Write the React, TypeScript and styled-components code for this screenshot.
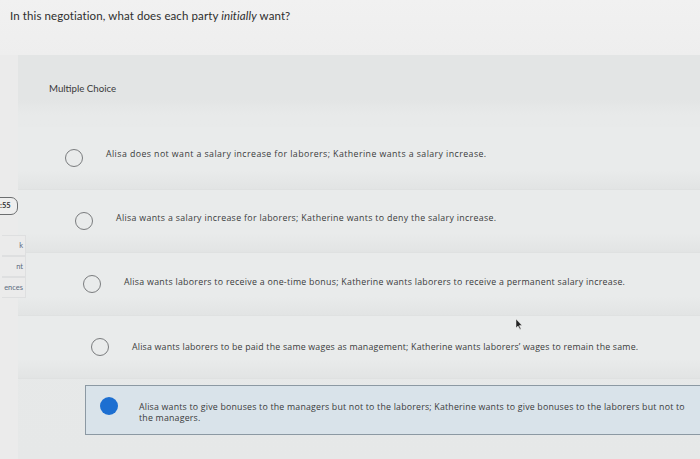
import React from "react";
import styled, { createGlobalStyle } from "styled-components";

const GlobalStyle = createGlobalStyle`
  html, body {
    margin: 0;
    padding: 0;
    background: #ebebeb;
  }
  body {
    font-family: Lato, "Open Sans", "Liberation Sans", sans-serif;
    color: #333;
  }
`;

const Page = styled.div`
  position: relative;
  width: 700px;
  height: 459px;
  overflow: hidden;
  background: #ebebeb;
`;

const Header = styled.header`
  height: 55px;
  box-sizing: border-box;
  padding: 9px 0 0 10px;
  background: linear-gradient(#f1f1f1, #eeeeee);
`;

const Title = styled.h1`
  margin: 0;
  font-size: 11.5px;
  font-weight: 400;
  color: #2e2e2e;
  letter-spacing: 0.1px;

  em {
    font-style: italic;
  }
`;

const Card = styled.main`
  margin-left: 18px;
  background: linear-gradient(
    #e3e5e5 0px,
    #e3e5e5 45px,
    #e8eaea 60px,
    #e6e8e8 100%
  );
  height: 404px;
  box-sizing: border-box;
  padding-top: 27px;
`;

const TypeLabel = styled.div`
  padding-left: 31px;
  font-size: 9.7px;
  color: #3a3a3a;
  height: 12px;
  line-height: 12px;
`;

const OptionList = styled.div`
  margin-top: 33px;
  display: flex;
  flex-direction: column;
`;

const Option = styled.div<{ $indent: number }>`
  display: flex;
  align-items: center;
  gap: 23px;
  height: 63px;
  box-sizing: border-box;
  padding-left: ${(p) => p.$indent}px;
  border-bottom: 1px solid #dfe1e1;
  background: linear-gradient(#e9ebeb 0%, #e9ebeb 70%, #e2e4e4 100%);
`;

const SelectedOption = styled.div<{ $indent: number }>`
  display: flex;
  align-items: center;
  gap: 21px;
  margin: 6px 0 0 ${(p) => p.$indent}px;
  height: 50px;
  box-sizing: border-box;
  padding: 0 10px 0 14px;
  background: #d9e3ea;
  border: 1px solid #8c99a3;
  border-right: none;
`;

const Radio = styled.span<{ $checked?: boolean }>`
  flex: none;
  width: 18px;
  height: 18px;
  border-radius: 50%;
  box-sizing: border-box;
  border: ${(p) => (p.$checked ? "none" : "1.3px solid #7a7c7e")};
  background: ${(p) => (p.$checked ? "#1d6fd1" : "transparent")};
  margin-bottom: ${(p) => (p.$checked ? "8px" : "0")};
`;

const OptionText = styled.span<{ $tracking: number; $lift?: number }>`
  font-family: "Open Sans", Lato, "Liberation Sans", sans-serif;
  font-size: 8.8px;
  line-height: 11px;
  letter-spacing: ${(p) => p.$tracking}px;
  color: #3a3b3c;
  margin-bottom: ${(p) => p.$lift ?? 0}px;
`;

const SideNav = styled.nav`
  position: absolute;
  left: 0;
  top: 197px;
  width: 26px;
  display: flex;
  flex-direction: column;
  align-items: flex-end;
`;

const TimerBadge = styled.div`
  align-self: flex-start;
  margin-left: -9px;
  width: 27px;
  height: 18px;
  box-sizing: border-box;
  border: 1.2px solid #6c6e70;
  border-radius: 7px;
  padding-left: 8px;
  font-size: 7.5px;
  font-weight: 700;
  line-height: 16px;
  color: #333;
  background: #eeeeee;
`;

const NavItem = styled.div<{ $first?: boolean }>`
  margin-top: ${(p) => (p.$first ? "20px" : "0")};
  width: 24px;
  height: 21px;
  box-sizing: border-box;
  border: 1px solid #dedfe0;
  border-left: none;
  font-size: 7.5px;
  color: #5c6c82;
  line-height: 20px;
  text-align: right;
  padding-right: 2px;
  overflow: hidden;
  white-space: nowrap;
  background: #ebebeb;
`;

const Cursor = styled.svg`
  position: absolute;
  left: 515px;
  top: 319px;
`;

const options = [
  {
    indent: 47,
    tracking: 0.42,
    lift: 8,
    text: "Alisa does not want a salary increase for laborers; Katherine wants a salary increase.",
  },
  {
    indent: 57,
    tracking: 0.32,
    lift: 5,
    text: "Alisa wants a salary increase for laborers; Katherine wants to deny the salary increase.",
  },
  {
    indent: 65,
    tracking: 0.28,
    lift: 3,
    text: "Alisa wants laborers to receive a one-time bonus; Katherine wants laborers to receive a permanent salary increase.",
  },
  {
    indent: 73,
    tracking: 0.2,
    lift: 0,
    text: "Alisa wants laborers to be paid the same wages as management; Katherine wants laborers\u2019 wages to remain the same.",
  },
];

export default function App() {
  return (
    <>
      <GlobalStyle />
      <Page>
        <Header>
          <Title>
            In this negotiation, what does each party <em>initially</em> want?
          </Title>
        </Header>
        <Card>
          <TypeLabel>Multiple Choice</TypeLabel>
          <OptionList>
            {options.map((o) => (
              <Option key={o.text} $indent={o.indent}>
                <Radio />
                <OptionText $tracking={o.tracking} $lift={o.lift}>
                  {o.text}
                </OptionText>
              </Option>
            ))}
            <SelectedOption $indent={67}>
              <Radio $checked />
              <OptionText $tracking={0.2} $lift={-6}>
                Alisa wants to give bonuses to the managers but not to the
                laborers; Katherine wants to give bonuses to the laborers but
                not to the managers.
              </OptionText>
            </SelectedOption>
          </OptionList>
        </Card>
        <SideNav>
          <TimerBadge>:55</TimerBadge>
          <NavItem $first>k</NavItem>
          <NavItem>nt</NavItem>
          <NavItem>ences</NavItem>
        </SideNav>
        <Cursor width="8" height="11" viewBox="0 0 8 11">
          <path d="M1 0 L1 9 L3 7 L5 10.5 L6 10 L4.3 6.6 L7 6.4 Z" fill="#222" stroke="#eee" strokeWidth="0.5" />
        </Cursor>
      </Page>
    </>
  );
}
